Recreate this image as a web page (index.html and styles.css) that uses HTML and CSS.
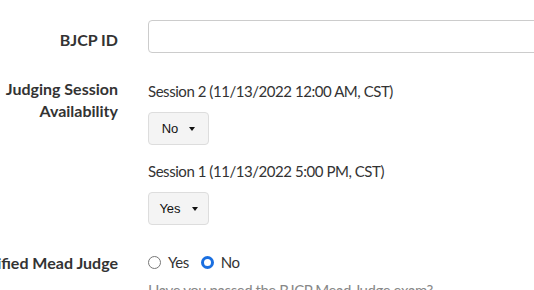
FILE: index.html
```html
<!DOCTYPE html>
<html>
<head>
<meta charset="utf-8">
<link rel="stylesheet" href="styles.css">
</head>
<body>
<div class="form">
  <div class="row row-id">
    <label class="label">BJCP ID</label>
    <div class="field"><input class="text-input" type="text"></div>
  </div>
  <div class="row row-sessions">
    <label class="label">Judging Session<br>Availability</label>
    <div class="field">
      <div class="session">
        <div class="session-title">Session 2 (11/13/2022 12:00 AM, CST)</div>
        <button class="dropdown">No<span class="caret"></span></button>
      </div>
      <div class="session">
        <div class="session-title">Session 1 (11/13/2022 5:00 PM, CST)</div>
        <button class="dropdown">Yes<span class="caret"></span></button>
      </div>
    </div>
  </div>
  <div class="row row-mead">
    <label class="label label-mead"><span>Certified Mead Judge</span></label>
    <div class="field">
      <div class="radios">
        <span class="radio-opt"><span class="radio"></span>Yes</span>
        <span class="radio-opt"><span class="radio checked"></span>No</span>
      </div>
      <div class="help">Have you passed the BJCP Mead Judge exam?</div>
    </div>
  </div>
</div>
</body>
</html>
```
FILE: styles.css
```css
html, body {
  margin: 0;
  padding: 0;
  background: #fff;
  overflow: hidden;
}
body {
  font-family: Lato, "Open Sans", sans-serif;
  font-size: 15px;
  letter-spacing: -0.45px;
  color: #333;
  width: 534px;
  height: 290px;
}
.form {
  padding-top: 20px;
  width: 800px;
}
.row {
  display: grid;
  grid-template-columns: 118px 1fr;
  column-gap: 30px;
}
.label {
  font-size: 16px;
  letter-spacing: 0;
  font-weight: bold;
  text-align: right;
  line-height: 22px;
  color: #333;
  white-space: nowrap;
  display: flex;
  justify-content: flex-end;
}
.label-mead span {
  flex-shrink: 0;
}
.row-id .label {
  margin-top: 9px;
}
.label-mead {
  margin-top: 1px;
}
.text-input {
  box-sizing: border-box;
  width: 600px;
  height: 33px;
  border: 1px solid #ccc;
  border-radius: 4px;
  display: block;
}
.row-sessions {
  margin-top: 22px;
}
.row-sessions .label {
  margin-top: 3px;
  display: block;
}
.session-title {
  line-height: 22px;
  padding-top: 5px;
}
.dropdown {
  margin-top: 10px;
  width: 61px;
  height: 33px;
  background: #f4f4f4;
  border: 1px solid #ddd;
  border-radius: 4px;
  font-family: "Liberation Sans", Arial, sans-serif;
  font-size: 13px;
  letter-spacing: 0;
  color: #111;
  display: flex;
  align-items: center;
  justify-content: center;
  gap: 11px;
  padding: 0;
}
.session + .session {
  margin-top: 15px;
}
.session + .session .session-title {
  padding-top: 0;
}
.caret {
  width: 0;
  height: 0;
  border-left: 3.5px solid transparent;
  border-right: 3.5px solid transparent;
  border-top: 4px solid #111;
}
.row-mead {
  margin-top: 26px;
}
.radios {
  display: flex;
  gap: 12px;
  line-height: 22px;
}
.radio-opt {
  display: flex;
  align-items: center;
  gap: 7px;
}
.radio {
  box-sizing: border-box;
  width: 13px;
  height: 13px;
  border-radius: 50%;
  border: 1.5px solid #777;
}
.radio.checked {
  border: 3.5px solid #1a6fe0;
}
.help {
  margin-top: 6px;
  color: #888;
  line-height: 22px;
}
```
